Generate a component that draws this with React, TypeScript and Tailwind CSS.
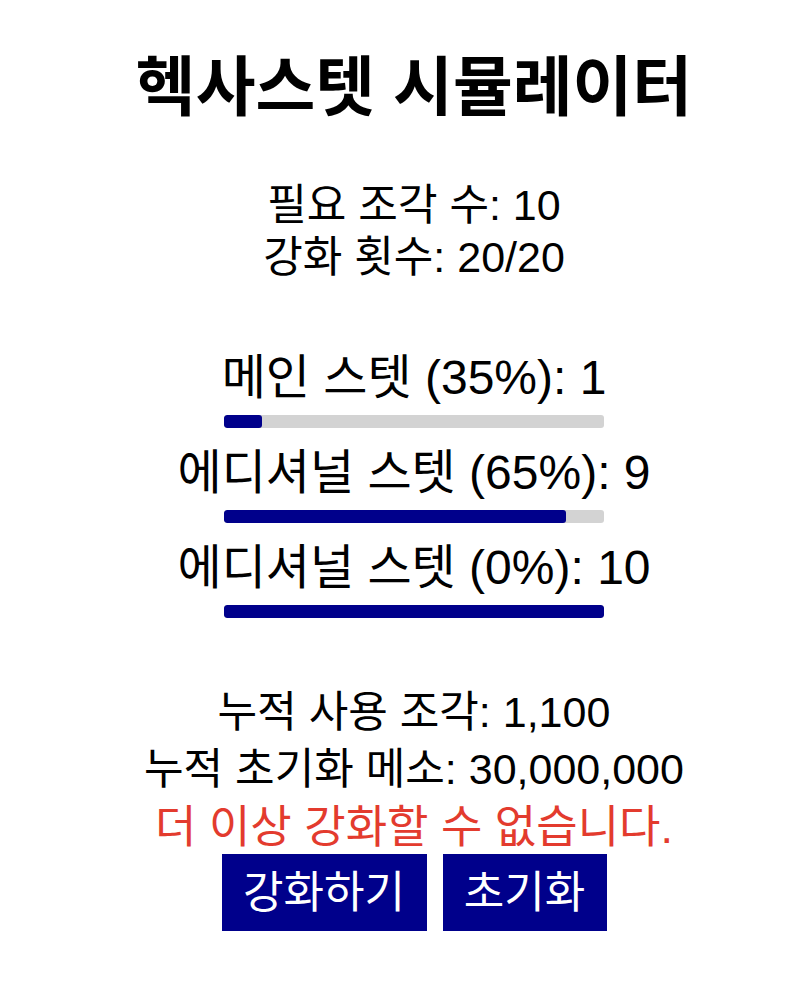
import React from "react";

const font = { fontFamily: '"Liberation Sans", "Noto Sans CJK KR", sans-serif' };

type Stat = { label: string; rate: string; level: number };

const stats: Stat[] = [
  { label: "메인 스텟", rate: "35%", level: 1 },
  { label: "에디셔널 스텟", rate: "65%", level: 9 },
  { label: "에디셔널 스텟", rate: "0%", level: 10 },
];

function StatRow({ stat, first }: { stat: Stat; first: boolean }) {
  return (
    <div className={`flex flex-col items-center ${first ? "mt-[67px]" : "mt-[17px]"}`}>
      <div className="text-[48px] leading-[56px] text-black whitespace-nowrap">
        {stat.label} ({stat.rate}): {stat.level}
      </div>
      <div className="mt-[9px] h-[13px] w-[380px] rounded-[3px] bg-[#d3d3d3] overflow-hidden">
        <div
          className="h-full rounded-[3px] bg-[#00008b]"
          style={{ width: `${stat.level * 10}%` }}
        />
      </div>
    </div>
  );
}

export default function App() {
  return (
    <div className="min-h-[993px] w-full bg-white pl-[28px] flex flex-col items-center text-black" style={font}>
      <h1 className="mt-[53px] text-[65px] font-bold leading-[70px] whitespace-nowrap">
        헥사스텟 시뮬레이터
      </h1>
      <div className="mt-[56px] flex flex-col items-center text-[43px] leading-[52px] whitespace-nowrap">
        <div>필요 조각 수: 10</div>
        <div>강화 횟수: 20/20</div>
      </div>
      {stats.map((s, i) => (
        <StatRow key={i} stat={s} first={i === 0} />
      ))}
      <div className="mt-[66px] flex flex-col items-center text-[43px] leading-[57px] whitespace-nowrap">
        <div>누적 사용 조각: 1,100</div>
        <div>누적 초기화 메소: 30,000,000</div>
      </div>
      <div className="mt-[6px] text-[45px] leading-[48px] text-[#e33b2e] whitespace-nowrap">
        더 이상 강화할 수 없습니다.
      </div>
      <div className="mt-[2px] flex gap-4">
        <button className="h-[77px] w-[205px] bg-[#00008b] text-white text-[44px] leading-none">
          강화하기
        </button>
        <button className="h-[77px] w-[164px] bg-[#00008b] text-white text-[44px] leading-none">
          초기화
        </button>
      </div>
    </div>
  );
}
